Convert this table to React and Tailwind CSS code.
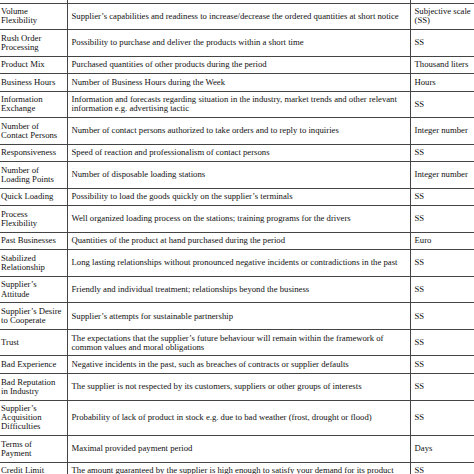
import React from "react";

const rows = [
  [["Volume", "Flexibility"], ["Supplier’s capabilities and readiness to increase/decrease the ordered quantities at short notice"], ["Subjective scale", "(SS)"]],
  [["Rush Order", "Processing"], ["Possibility to purchase and deliver the products within a short time"], ["SS"]],
  [["Product Mix"], ["Purchased quantities of other products during the period"], ["Thousand liters"]],
  [["Business Hours"], ["Number of Business Hours during the Week"], ["Hours"]],
  [["Information", "Exchange"], ["Information and forecasts regarding situation in the industry, market trends and other relevant", "information e.g. advertising tactic"], ["SS"]],
  [["Number of", "Contact Persons"], ["Number of contact persons authorized to take orders and to reply to inquiries"], ["Integer number"]],
  [["Responsiveness"], ["Speed of reaction and professionalism of contact persons"], ["SS"]],
  [["Number of", "Loading Points"], ["Number of disposable loading stations"], ["Integer number"]],
  [["Quick Loading"], ["Possibility to load the goods quickly on the supplier’s terminals"], ["SS"]],
  [["Process", "Flexibility"], ["Well organized loading process on the stations; training programs for the drivers"], ["SS"]],
  [["Past Businesses"], ["Quantities of the product at hand purchased during the period"], ["Euro"]],
  [["Stabilized", "Relationship"], ["Long lasting relationships without pronounced negative incidents or contradictions in the past"], ["SS"]],
  [["Supplier’s", "Attitude"], ["Friendly and individual treatment; relationships beyond the business"], ["SS"]],
  [["Supplier’s Desire", "to Cooperate"], ["Supplier’s attempts for sustainable partnership"], ["SS"]],
  [["Trust"], ["The expectations that the supplier’s future behaviour will remain within the framework of", "common values and moral obligations"], ["SS"]],
  [["Bad Experience"], ["Negative incidents in the past, such as breaches of contracts or supplier defaults"], ["SS"]],
  [["Bad Reputation", "in Industry"], ["The supplier is not respected by its customers, suppliers or other groups of interests"], ["SS"]],
  [["Supplier’s", "Acquisition", "Difficulties"], ["Probability of lack of product in stock e.g. due to bad weather (frost, drought or flood)"], ["SS"]],
  [["Terms of", "Payment"], ["Maximal provided payment period"], ["Days"]],
  [["Credit Limit"], ["The amount guaranteed by the supplier is high enough to satisfy your demand for its product"], ["SS"]],
];

const Lines = ({ lines }) =>
  lines.map((l, i) => (
    <div key={i} className="whitespace-nowrap">
      {l}
    </div>
  ));

export default function App() {
  return (
    <div className="w-[474px] h-[474px] overflow-hidden bg-white">
      <table
        className="w-[480px] border-collapse table-fixed text-[8.7px] leading-[9.1px] text-[#111]"
        style={{ fontFamily: '"Liberation Serif", "Times New Roman", serif' }}
      >
        <colgroup>
          <col className="w-[67px]" />
          <col className="w-[343px]" />
          <col />
        </colgroup>
        <tbody>
          <tr className="h-[3px]">
            <td className="p-0 border-r border-[#444]" />
            <td className="p-0 border-r border-[#444]" />
            <td className="p-0" />
          </tr>
          {rows.map((r, i) => (
            <tr key={i} className="border-t border-[#444]">
              <td className="border-r border-[#444] pl-[1px] pr-0 py-[3.7px] align-middle">
                <Lines lines={r[0]} />
              </td>
              <td className="border-r border-[#444] pl-[4px] pr-0 py-[3.7px] align-middle">
                <Lines lines={r[1]} />
              </td>
              <td className="pl-[4px] pr-0 py-[3.7px] align-middle">
                <Lines lines={r[2]} />
              </td>
            </tr>
          ))}
        </tbody>
      </table>
    </div>
  );
}
